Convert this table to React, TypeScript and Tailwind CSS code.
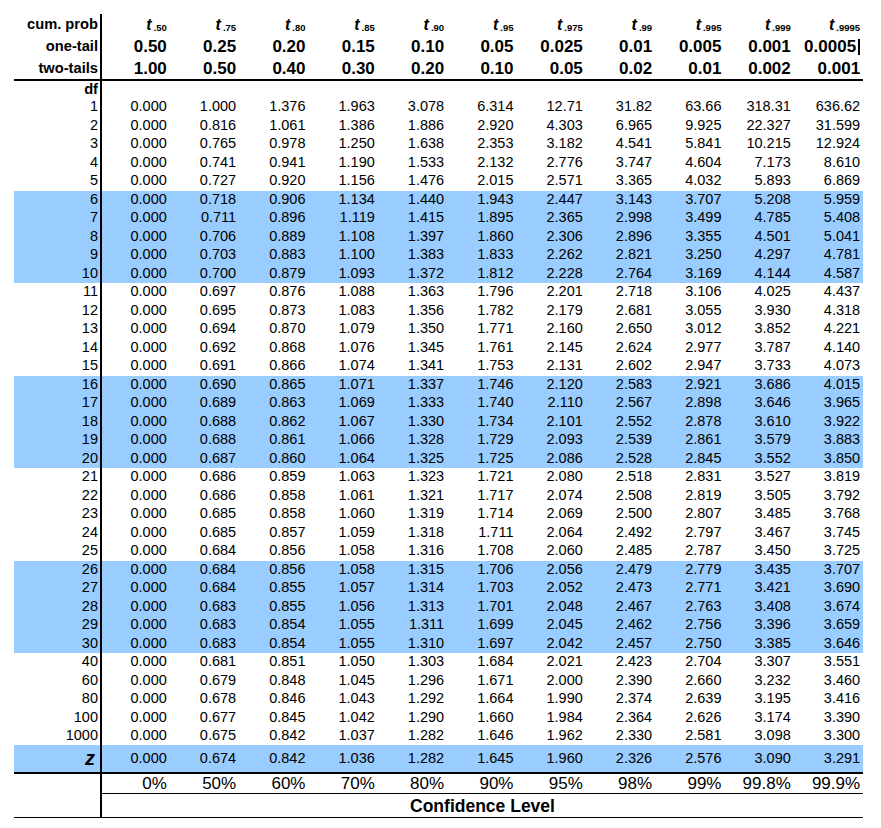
import React from "react";

const font = "font-['Liberation_Sans',Arial,Helvetica,sans-serif]";

const tHeads = [".50", ".75", ".80", ".85", ".90", ".95", ".975", ".99", ".995", ".999", ".9995"];
const oneTail = ["0.50", "0.25", "0.20", "0.15", "0.10", "0.05", "0.025", "0.01", "0.005", "0.001", "0.0005"];
const twoTails = ["1.00", "0.50", "0.40", "0.30", "0.20", "0.10", "0.05", "0.02", "0.01", "0.002", "0.001"];
const confidence = ["0%", "50%", "60%", "70%", "80%", "90%", "95%", "98%", "99%", "99.8%", "99.9%"];

const raw = `1 0.000 1.000 1.376 1.963 3.078 6.314 12.71 31.82 63.66 318.31 636.62
2 0.000 0.816 1.061 1.386 1.886 2.920 4.303 6.965 9.925 22.327 31.599
3 0.000 0.765 0.978 1.250 1.638 2.353 3.182 4.541 5.841 10.215 12.924
4 0.000 0.741 0.941 1.190 1.533 2.132 2.776 3.747 4.604 7.173 8.610
5 0.000 0.727 0.920 1.156 1.476 2.015 2.571 3.365 4.032 5.893 6.869
6 0.000 0.718 0.906 1.134 1.440 1.943 2.447 3.143 3.707 5.208 5.959
7 0.000 0.711 0.896 1.119 1.415 1.895 2.365 2.998 3.499 4.785 5.408
8 0.000 0.706 0.889 1.108 1.397 1.860 2.306 2.896 3.355 4.501 5.041
9 0.000 0.703 0.883 1.100 1.383 1.833 2.262 2.821 3.250 4.297 4.781
10 0.000 0.700 0.879 1.093 1.372 1.812 2.228 2.764 3.169 4.144 4.587
11 0.000 0.697 0.876 1.088 1.363 1.796 2.201 2.718 3.106 4.025 4.437
12 0.000 0.695 0.873 1.083 1.356 1.782 2.179 2.681 3.055 3.930 4.318
13 0.000 0.694 0.870 1.079 1.350 1.771 2.160 2.650 3.012 3.852 4.221
14 0.000 0.692 0.868 1.076 1.345 1.761 2.145 2.624 2.977 3.787 4.140
15 0.000 0.691 0.866 1.074 1.341 1.753 2.131 2.602 2.947 3.733 4.073
16 0.000 0.690 0.865 1.071 1.337 1.746 2.120 2.583 2.921 3.686 4.015
17 0.000 0.689 0.863 1.069 1.333 1.740 2.110 2.567 2.898 3.646 3.965
18 0.000 0.688 0.862 1.067 1.330 1.734 2.101 2.552 2.878 3.610 3.922
19 0.000 0.688 0.861 1.066 1.328 1.729 2.093 2.539 2.861 3.579 3.883
20 0.000 0.687 0.860 1.064 1.325 1.725 2.086 2.528 2.845 3.552 3.850
21 0.000 0.686 0.859 1.063 1.323 1.721 2.080 2.518 2.831 3.527 3.819
22 0.000 0.686 0.858 1.061 1.321 1.717 2.074 2.508 2.819 3.505 3.792
23 0.000 0.685 0.858 1.060 1.319 1.714 2.069 2.500 2.807 3.485 3.768
24 0.000 0.685 0.857 1.059 1.318 1.711 2.064 2.492 2.797 3.467 3.745
25 0.000 0.684 0.856 1.058 1.316 1.708 2.060 2.485 2.787 3.450 3.725
26 0.000 0.684 0.856 1.058 1.315 1.706 2.056 2.479 2.779 3.435 3.707
27 0.000 0.684 0.855 1.057 1.314 1.703 2.052 2.473 2.771 3.421 3.690
28 0.000 0.683 0.855 1.056 1.313 1.701 2.048 2.467 2.763 3.408 3.674
29 0.000 0.683 0.854 1.055 1.311 1.699 2.045 2.462 2.756 3.396 3.659
30 0.000 0.683 0.854 1.055 1.310 1.697 2.042 2.457 2.750 3.385 3.646`;

const rawLarge = `40 0.000 0.681 0.851 1.050 1.303 1.684 2.021 2.423 2.704 3.307 3.551
60 0.000 0.679 0.848 1.045 1.296 1.671 2.000 2.390 2.660 3.232 3.460
80 0.000 0.678 0.846 1.043 1.292 1.664 1.990 2.374 2.639 3.195 3.416
100 0.000 0.677 0.845 1.042 1.290 1.660 1.984 2.364 2.626 3.174 3.390
1000 0.000 0.675 0.842 1.037 1.282 1.646 1.962 2.330 2.581 3.098 3.300`;

const zRow = ["0.000", "0.674", "0.842", "1.036", "1.282", "1.645", "1.960", "2.326", "2.576", "3.090", "3.291"];

const parse = (s: string) => s.split("\n").map((l) => l.trim().split(/\s+/));
const smallDf = parse(raw);
const largeDf = parse(rawLarge);

const isBand = (df: number) => (df >= 6 && df <= 10) || (df >= 16 && df <= 20) || (df >= 26 && df <= 30);

function Label({ children, className = "" }: { children?: React.ReactNode; className?: string }) {
  return (
    <div className={`w-[88px] shrink-0 border-r-2 border-black flex items-center justify-end pr-[2px] ${className}`}>
      {children}
    </div>
  );
}

function Cell({ children, className = "" }: { children?: React.ReactNode; className?: string }) {
  return <div className={`w-[69.33px] shrink-0 flex items-center justify-end pr-[4.5px] ${className}`}>{children}</div>;
}

export default function App() {
  return (
    <div className={`min-h-[828px] w-[881px] bg-white text-black ${font}`}>
      <div className="ml-[14px] pt-[14px] w-[849px] flex flex-col">
        {/* header: cum. prob */}
        <div className="flex h-[21px]">
          <Label className="font-bold text-[14.7px]">cum. prob</Label>
          {tHeads.map((t) => (
            <Cell key={t}>
              <span className="font-bold italic text-[16px] leading-none">t</span>
              <span className="font-bold text-[9.5px] leading-none ml-[2px] align-[-3px] self-end mb-[3px]">{t}</span>
            </Cell>
          ))}
        </div>

        {/* header: one-tail */}
        <div className="flex h-[23px]">
          <Label className="font-bold text-[14.7px]">one-tail</Label>
          {oneTail.map((v, i) =>
            i === oneTail.length - 1 ? (
              <Cell key={i} className="font-bold text-[17px] pr-0">
                <span className="inline-block leading-[16px] border-r-2 border-black pr-[2px]">{v}</span>
              </Cell>
            ) : (
              <Cell key={i} className="font-bold text-[17px]">
                {v}
              </Cell>
            )
          )}
        </div>

        {/* header: two-tails */}
        <div className="flex h-[21px]">
          <Label className="font-bold text-[14.7px]">two-tails</Label>
          {twoTails.map((v, i) => (
            <Cell key={i} className="font-bold text-[17px]">
              {v}
            </Cell>
          ))}
        </div>

        <div className="h-[2px] bg-black" />

        {/* df label row */}
        <div className="flex h-[17px]">
          <Label className="font-bold text-[14.7px]">df</Label>
        </div>

        {smallDf.map(([df, ...vals]) => (
          <div key={df} className={`flex h-[18.5px] text-[14.5px] ${isBand(Number(df)) ? "bg-[#99ccff]" : ""}`}>
            <Label>{df}</Label>
            {vals.map((v, i) => (
              <Cell key={i}>{v}</Cell>
            ))}
          </div>
        ))}

        {largeDf.map(([df, ...vals]) => (
          <div key={df} className="flex h-[18.4px] text-[14.5px]">
            <Label>{df}</Label>
            {vals.map((v, i) => (
              <Cell key={i}>{v}</Cell>
            ))}
          </div>
        ))}

        {/* z row */}
        <div className="flex h-[27px] text-[14.5px] bg-[#99ccff]">
          <Label className="pr-[5px]">
            <span className="font-bold italic text-[20px]">z</span>
          </Label>
          {zRow.map((v, i) => (
            <Cell key={i}>{v}</Cell>
          ))}
        </div>

        <div className="h-[2px] bg-black" />

        {/* confidence percentages */}
        <div className="flex h-[19px] text-[17px]">
          <Label />
          {confidence.map((v, i) => (
            <Cell key={i}>{v}</Cell>
          ))}
        </div>

        <div className="flex h-[1.5px]">
          <Label />
          <div className="flex-1 bg-black" />
        </div>

        <div className="flex h-[22.5px]">
          <Label />
          <div className="flex-1 flex items-center justify-center font-bold text-[17.5px]">Confidence Level</div>
        </div>

        <div className="h-[1.5px] bg-black" />
      </div>
    </div>
  );
}
